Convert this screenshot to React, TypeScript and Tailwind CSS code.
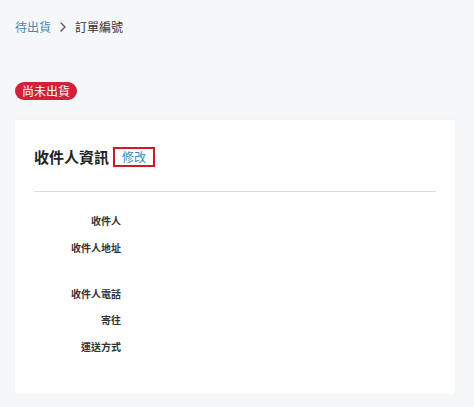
const font = { fontFamily: '"Noto Sans CJK TC", "Noto Sans", sans-serif' };

const rows: { label: string; tall?: boolean }[] = [
  { label: "收件人" },
  { label: "收件人地址", tall: true },
  { label: "收件人電話" },
  { label: "寄往" },
  { label: "運送方式" },
];

function ChevronRight() {
  return (
    <svg className="ml-[9px] mr-[9px] h-[10px] w-[6px]" viewBox="0 0 6 10" fill="none">
      <path d="M1 1l4 4-4 4" stroke="#555" strokeWidth="1.3" strokeLinecap="round" strokeLinejoin="round" />
    </svg>
  );
}

export default function App() {
  return (
    <div className="min-h-[407px] w-full bg-[#f6f7f9] px-[15px] pt-[18px]" style={font}>
      <nav className="flex h-[18px] items-center text-[12px] leading-[18px]">
        <span className="text-[#3a8cb8]">待出貨</span>
        <ChevronRight />
        <span className="text-[#333]">訂單編號</span>
      </nav>

      <div className="mt-[46px] flex">
        <span className="flex h-[18px] items-center rounded-full bg-[#d2213a] px-[7px] text-[12px] leading-none text-white">
          尚未出貨
        </span>
      </div>

      <section className="mt-[20px] h-[274px] w-[440px] bg-white px-[19px] pt-[27px] shadow-[0_0_2px_rgba(0,0,0,0.04)]">
        <div className="flex items-center">
          <h2 className="text-[15px] font-bold leading-[20px] text-[#222]">收件人資訊</h2>
          <button className="ml-[4px] flex h-[20px] w-[42px] items-center justify-center border-2 border-[#d01a24] text-[12px] leading-none text-[#3a8cb8]">
            修改
          </button>
        </div>
        <div className="mt-[24px] h-px bg-[#dcdcdc]" />

        <dl className="pt-[16px]">
          {rows.map((row) => (
            <div key={row.label} className={row.tall ? "flex h-[46px]" : "flex h-[26.5px]"}>
              <dt className="h-[26.5px] w-[87px] text-right text-[10px] font-semibold leading-[26.5px] text-[#333]">
                {row.label}
              </dt>
              <dd className="ml-4 text-[10px] leading-[26.5px] text-[#333]" />
            </div>
          ))}
        </dl>
      </section>
    </div>
  );
}
